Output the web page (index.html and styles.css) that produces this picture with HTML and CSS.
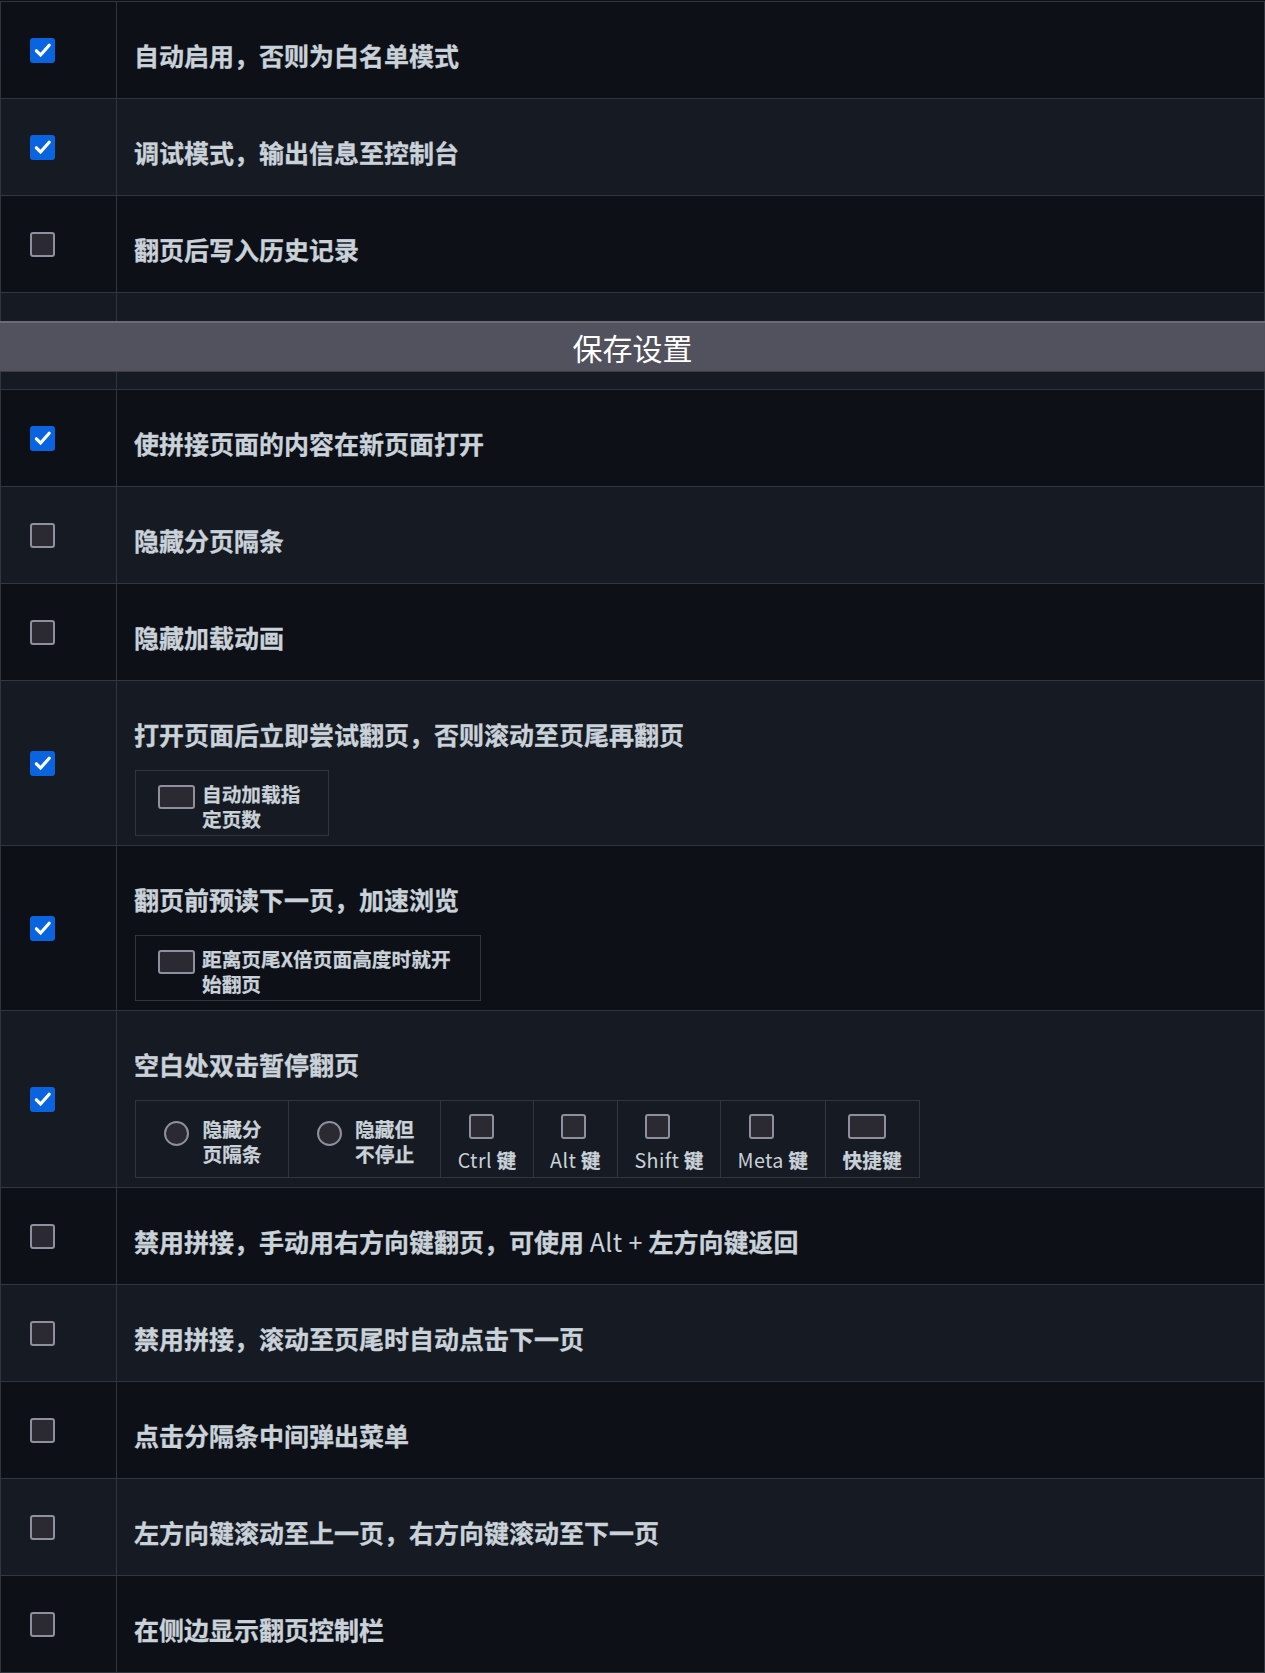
FILE: index.html
```html
<!DOCTYPE html>
<html lang="zh-CN">
<head>
<meta charset="utf-8">
<title>设置</title>
<link rel="stylesheet" href="styles.css">
</head>
<body>
<div class="table">
  <div class="row dark">
    <div class="c1"><span class="cb on"><svg viewBox="0 0 25 25"><path d="M6.4 12.8 L10.6 17 L19.2 7.2"/></svg></span></div>
    <div class="c2"><div class="title">自动启用，否则为白名单模式</div></div>
  </div>
  <div class="row light">
    <div class="c1"><span class="cb on"><svg viewBox="0 0 25 25"><path d="M6.4 12.8 L10.6 17 L19.2 7.2"/></svg></span></div>
    <div class="c2"><div class="title">调试模式，输出信息至控制台</div></div>
  </div>
  <div class="row dark">
    <div class="c1"><span class="cb"></span></div>
    <div class="c2"><div class="title">翻页后写入历史记录</div></div>
  </div>
  <div class="row light save-row">
    <div class="c1"></div>
    <div class="c2"></div>
    <button class="save">保存设置</button>
  </div>
  <div class="row dark">
    <div class="c1"><span class="cb on"><svg viewBox="0 0 25 25"><path d="M6.4 12.8 L10.6 17 L19.2 7.2"/></svg></span></div>
    <div class="c2"><div class="title">使拼接页面的内容在新页面打开</div></div>
  </div>
  <div class="row light">
    <div class="c1"><span class="cb"></span></div>
    <div class="c2"><div class="title">隐藏分页隔条</div></div>
  </div>
  <div class="row dark">
    <div class="c1"><span class="cb"></span></div>
    <div class="c2"><div class="title">隐藏加载动画</div></div>
  </div>
  <div class="row light">
    <div class="c1"><span class="cb on"><svg viewBox="0 0 25 25"><path d="M6.4 12.8 L10.6 17 L19.2 7.2"/></svg></span></div>
    <div class="c2">
      <div class="title">打开页面后立即尝试翻页，否则滚动至页尾再翻页</div>
      <div class="sub">
        <span class="cb wide"></span>
        <span class="subtxt w5">自动加载指定页数</span>
      </div>
    </div>
  </div>
  <div class="row dark">
    <div class="c1"><span class="cb on"><svg viewBox="0 0 25 25"><path d="M6.4 12.8 L10.6 17 L19.2 7.2"/></svg></span></div>
    <div class="c2">
      <div class="title">翻页前预读下一页，加速浏览</div>
      <div class="sub">
        <span class="cb wide"></span>
        <span class="subtxt w13">距离页尾X倍页面高度时就开始翻页</span>
      </div>
    </div>
  </div>
  <div class="row light">
    <div class="c1"><span class="cb on"><svg viewBox="0 0 25 25"><path d="M6.4 12.8 L10.6 17 L19.2 7.2"/></svg></span></div>
    <div class="c2">
      <div class="title">空白处双击暂停翻页</div>
      <div class="opts">
        <div class="opt radio-opt"><span class="radio"></span><span class="optxt">隐藏分页隔条</span></div>
        <div class="opt radio-opt"><span class="radio"></span><span class="optxt">隐藏但不停止</span></div>
        <div class="opt check-opt"><span class="cb"></span><span class="oplabel"><span class="lat">Ctrl</span> 键</span></div>
        <div class="opt check-opt"><span class="cb"></span><span class="oplabel"><span class="lat">Alt</span> 键</span></div>
        <div class="opt check-opt"><span class="cb"></span><span class="oplabel"><span class="lat">Shift</span> 键</span></div>
        <div class="opt check-opt"><span class="cb"></span><span class="oplabel"><span class="lat">Meta</span> 键</span></div>
        <div class="opt check-opt key-opt"><span class="cb wide key"></span><span class="oplabel">快捷键</span></div>
      </div>
    </div>
  </div>
  <div class="row dark">
    <div class="c1"><span class="cb"></span></div>
    <div class="c2"><div class="title">禁用拼接，手动用右方向键翻页，可使用 <span class="lat">Alt +</span> 左方向键返回</div></div>
  </div>
  <div class="row light">
    <div class="c1"><span class="cb"></span></div>
    <div class="c2"><div class="title">禁用拼接，滚动至页尾时自动点击下一页</div></div>
  </div>
  <div class="row dark">
    <div class="c1"><span class="cb"></span></div>
    <div class="c2"><div class="title">点击分隔条中间弹出菜单</div></div>
  </div>
  <div class="row light">
    <div class="c1"><span class="cb"></span></div>
    <div class="c2"><div class="title">左方向键滚动至上一页，右方向键滚动至下一页</div></div>
  </div>
  <div class="row dark">
    <div class="c1"><span class="cb"></span></div>
    <div class="c2"><div class="title">在侧边显示翻页控制栏</div></div>
  </div>
</div>
</body>
</html>
```

FILE: styles.css
```css
html, body {
  margin: 0;
  padding: 0;
  background: #0d1117;
}

body {
  font-family: "Noto Sans CJK SC", "Noto Sans", sans-serif;
  color: #c9d1d9;
  padding-top: 1px;
}

.table {
  width: 1265px;
  box-sizing: border-box;
  border: 1px solid #30363d;
  border-bottom: 0;
}

.row {
  display: grid;
  grid-template-columns: 116px 1fr;
  min-height: 96px;
  border-bottom: 1px solid #30363d;
}

.row.dark { background: #0d1017; }
.row.light { background: #161a22; }

.c1 {
  border-right: 1px solid #30363d;
  display: flex;
  align-items: center;
  padding-left: 29px;
}

.c2 {
  padding: 35px 16px 9px 17px;
}

.title {
  font-size: 25px;
  line-height: 36px;
  font-weight: 700;
  white-space: nowrap;
  -webkit-text-stroke: 0.3px #c9d1d9;
}

.lat {
  font-weight: 400;
  -webkit-text-stroke: 0;
  letter-spacing: 0.4px;
}

/* checkbox look */
.cb {
  display: block;
  box-sizing: border-box;
  width: 25px;
  height: 25px;
  border: 2px solid #8f8f9d;
  border-radius: 3px;
  background: #2b2a33;
  flex: none;
}

.cb.on {
  border: 0;
  background: #0b64df;
}

.cb svg {
  display: block;
  width: 25px;
  height: 25px;
}

.cb svg path {
  fill: none;
  stroke: #ffffff;
  stroke-width: 3.2;
  stroke-linecap: round;
  stroke-linejoin: miter;
}

.cb.wide {
  width: 37px;
  height: 24px;
}

.radio {
  display: block;
  box-sizing: border-box;
  width: 25px;
  height: 25px;
  border: 2px solid #8f8f9d;
  border-radius: 50%;
  background: #2b2a33;
  flex: none;
}

/* sub option box */
.sub {
  display: inline-flex;
  align-items: flex-start;
  margin-top: 18px;
  margin-left: 1px;
  border: 1px solid #30363d;
  padding: 7px 27px 4px 22px;
}

.sub .cb {
  margin-top: 7px;
  margin-right: 7px;
}

.subtxt {
  padding-top: 3px;
  font-size: 19.7px;
  line-height: 25px;
  font-weight: 700;
  -webkit-text-stroke: 0.25px #c9d1d9;
}

.subtxt.w5 { width: 5em; }
.subtxt.w13 { width: 12.75em; }

/* options group */
.opts {
  display: inline-flex;
  margin-top: 18px;
  margin-left: 1px;
  border: 1px solid #30363d;
}

.opt {
  display: flex;
  padding: 13px 16.5px 7px 16.5px;
  border-right: 1px solid #30363d;
  font-size: 19.7px;
  line-height: 28px;
  font-weight: 700;
  -webkit-text-stroke: 0.25px #c9d1d9;
}

.opt:last-child {
  border-right: 0;
}

.radio-opt {
  align-items: flex-start;
  padding-left: 28px;
  padding-right: 26px;
}

.radio-opt .radio {
  margin-top: 7px;
  margin-right: 13.5px;
}

.optxt {
  width: 3em;
  margin-top: 1.5px;
  line-height: 25px;
}

.check-opt {
  flex-direction: column;
  align-items: flex-start;
  padding-bottom: 3px;
}

.check-opt .cb {
  margin-left: 11px;
  margin-bottom: 7px;
}

.check-opt .cb.key {
  width: 38px;
  height: 25px;
  margin-left: 5px;
}

.key-opt {
  padding-left: 17px;
  padding-right: 17px;
}

.oplabel {
  white-space: nowrap;
}

/* save button overlay */
.save-row {
  position: relative;
}

.save {
  position: absolute;
  left: -1px;
  top: 28px;
  width: 1265px;
  height: 51px;
  margin: 0;
  padding: 0;
  box-sizing: border-box;
  border: 0;
  border-top: 2px solid #6b6b76;
  border-bottom: 1px solid #3c3c46;
  background: #52525e;
  color: #ffffff;
  font-family: "Noto Sans CJK SC", "Noto Sans", sans-serif;
  font-size: 30px;
  font-weight: 400;
  line-height: 1;
  display: flex;
  align-items: center;
  justify-content: center;
}
```
